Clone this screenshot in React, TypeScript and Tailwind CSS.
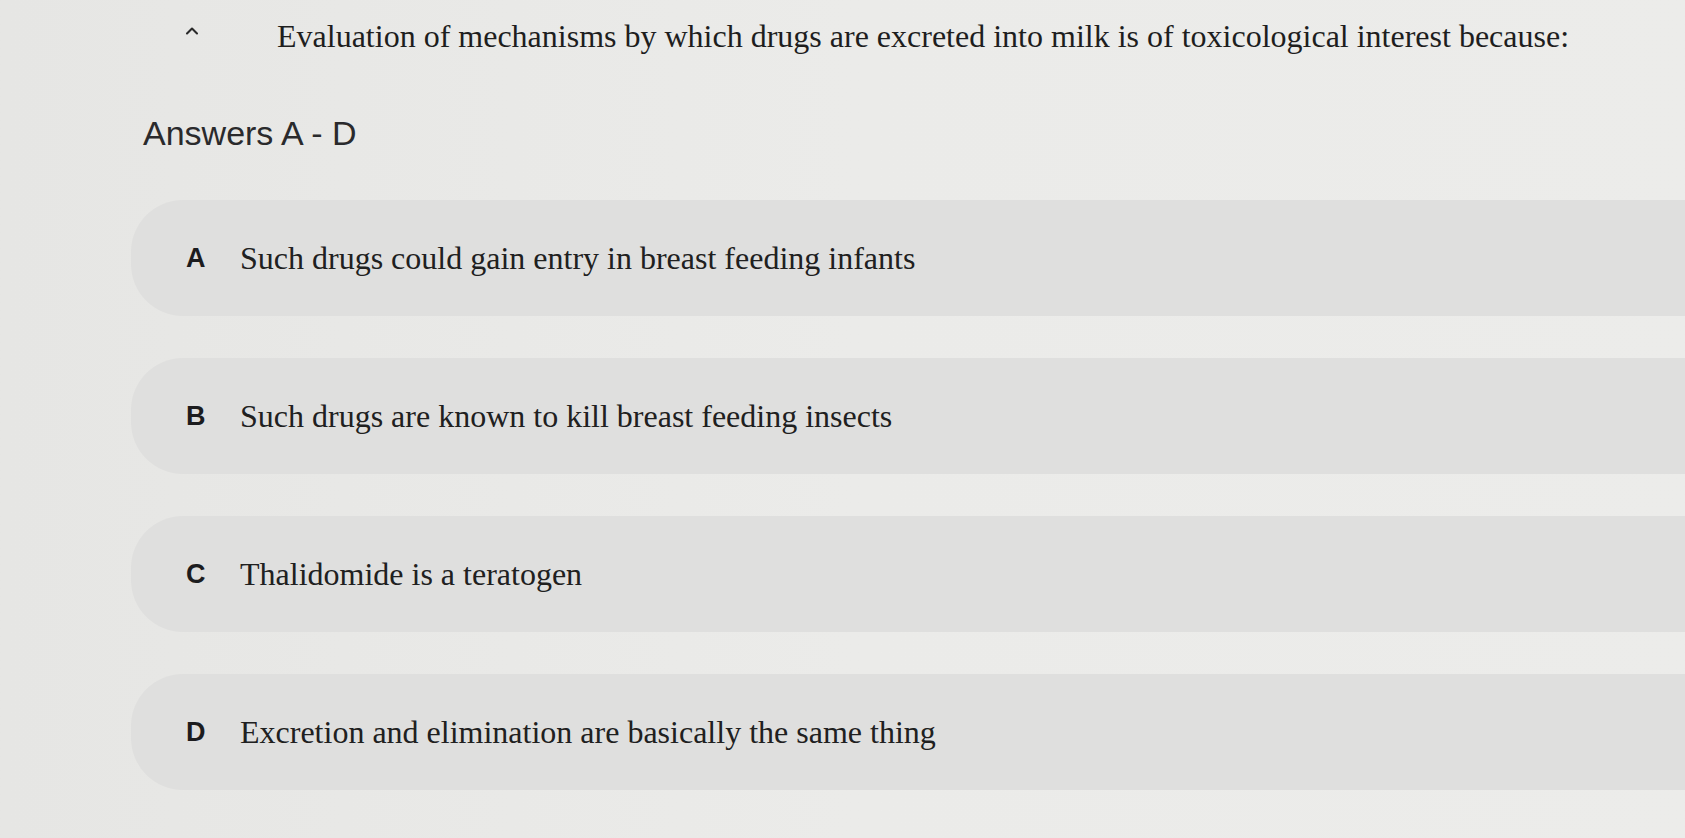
import { ChevronUp } from "lucide-react";

const serif = "font-['Liberation_Serif','Times_New_Roman',serif]";
const sans = "font-['Liberation_Sans',Arial,sans-serif]";

const answers = [
  { letter: "A", text: "Such drugs could gain entry in breast feeding infants" },
  { letter: "B", text: "Such drugs are known to kill breast feeding insects" },
  { letter: "C", text: "Thalidomide is a teratogen" },
  { letter: "D", text: "Excretion and elimination are basically the same thing" },
];

const AnswerRow = ({ letter, text }: { letter: string; text: string }) => {
  return (
    <div className="ml-[131px] flex h-[116px] items-center rounded-l-[52px] bg-[#dfdfde] pl-[55px]">
      <span className={`${sans} w-[54px] text-[27px] font-bold text-[#1c1c1e]`}>
        {letter}
      </span>
      <span className={`${serif} text-[32px] leading-[38px] text-[#202020]`}>
        {text}
      </span>
    </div>
  );
};

export default function App() {
  return (
    <div className="min-h-screen w-full overflow-hidden bg-gradient-to-r from-[#e6e6e4] via-[#ebebe9] to-[#ececea] pt-[17px]">
      <div className="flex items-center pl-[182px]">
        <ChevronUp size={20} strokeWidth={2.5} className="-mt-[10px] text-[#2a2a2a]" />
        <p className={`${serif} ml-[75px] text-[32px] leading-[38px] text-[#1e1e1e]`}>
          Evaluation of mechanisms by which drugs are excreted into milk is of
          toxicological interest because:
        </p>
      </div>

      <p className={`${sans} mt-[58px] pl-[143px] text-[34px] leading-[40px] text-[#2a2a2c]`}>
        Answers A - D
      </p>

      <div className="mt-[47px] flex flex-col gap-[42px]">
        {answers.map((a) => (
          <AnswerRow key={a.letter} letter={a.letter} text={a.text} />
        ))}
      </div>
    </div>
  );
}
